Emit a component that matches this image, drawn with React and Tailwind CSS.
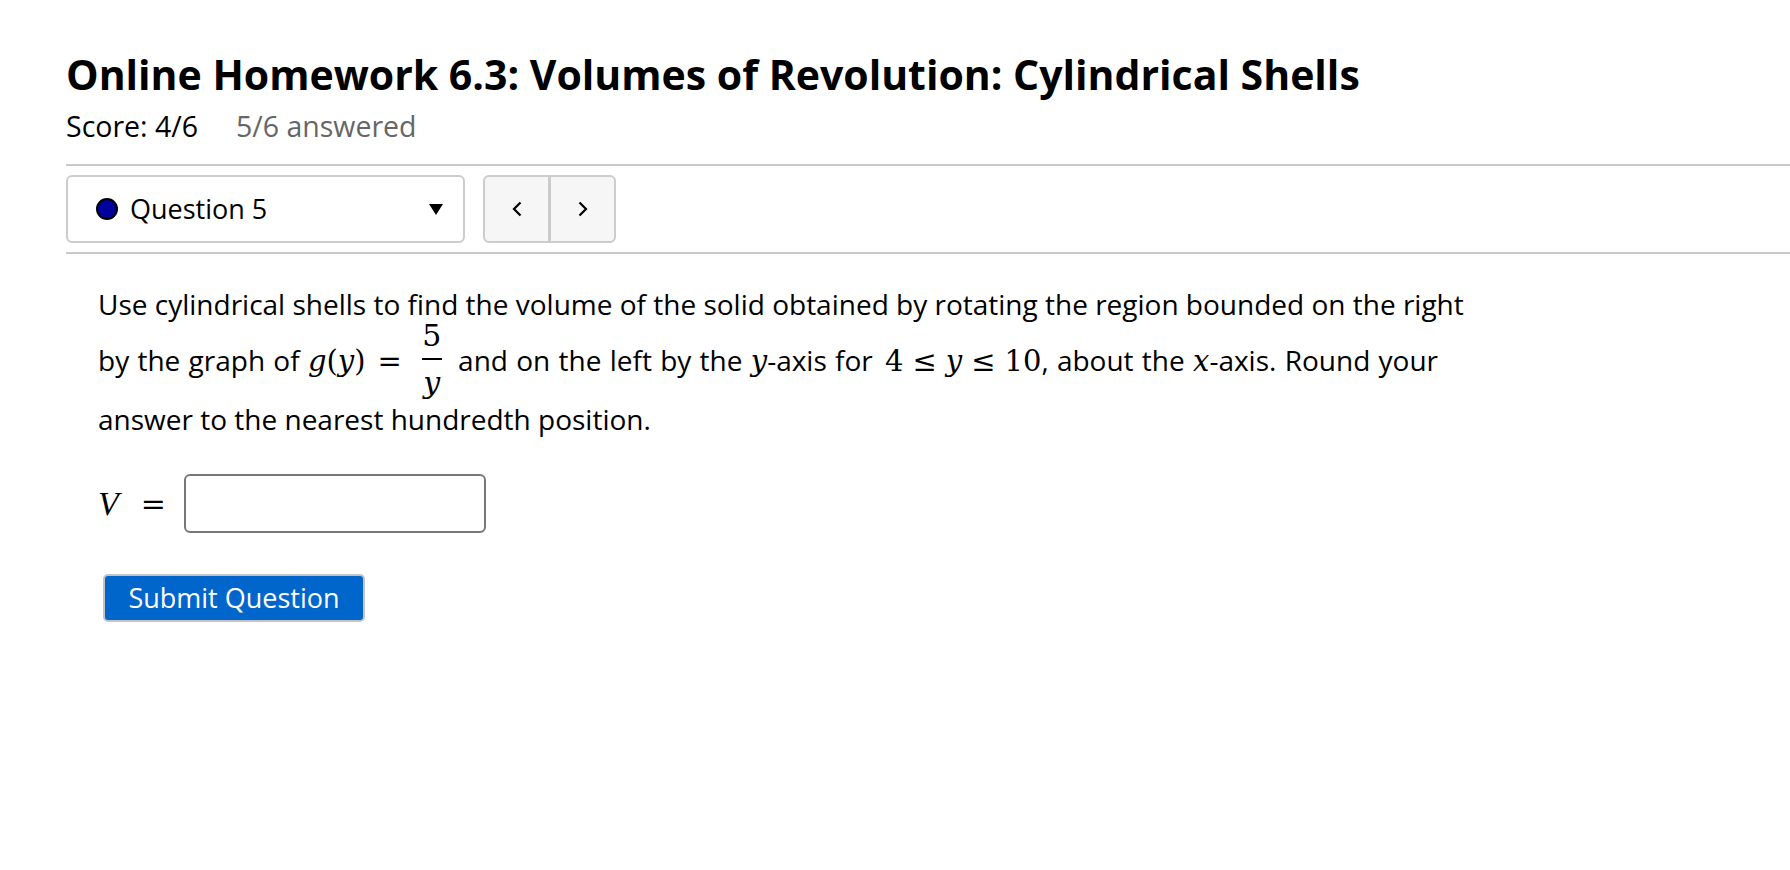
import React from "react";

// math is set in DejaVu Serif, its widths sit closest to the reference's TeX glyphs
function Mi({ children }) {
  return <span className="font-['DejaVu_Serif',serif] italic text-[29px]">{children}</span>;
}

function Mn({ children, className = "" }) {
  return <span className={`font-['DejaVu_Serif',serif] text-[29px] ${className}`}>{children}</span>;
}

function Frac() {
  return (
    <span className="inline-flex flex-col items-center align-[25px] ml-[20px] mr-[8px] font-['DejaVu_Serif',serif] text-[30px]">
      <span className="leading-[24px]">5</span>
      <span className="mt-[10px] border-t-[2px] border-black w-[20px]"></span>
      <span className="italic leading-[24px] mt-[11px]">y</span>
    </span>
  );
}

export default function App() {
  return (
    <div className="min-h-screen bg-white text-black font-['Open_Sans',sans-serif]">
      <div className="pl-[66px] pt-[50px]">
        <h1 className="text-[41px] font-bold leading-[48px]">
          Online Homework 6.3: Volumes of Revolution: Cylindrical Shells
        </h1>
        <div className="flex gap-[38px] text-[28.5px] mt-[12px] leading-[32px]">
          <span>Score: 4/6</span>
          <span className="text-[#666]">5/6 answered</span>
        </div>

        <div className="mt-[22px] border-t-2 border-[#c8c8c8]"></div>

        <div className="flex gap-[18px] py-[9px]">
          <div className="w-[399px] h-[68px] border-2 border-[#cccccc] rounded-[6px] flex items-center pl-[28px] pr-[20px]">
            <span className="w-[22px] h-[22px] rounded-full bg-[#00009c] border-2 border-black"></span>
            <span className="ml-[12px] text-[27px]">Question 5</span>
            <svg className="ml-auto" width="14" height="11" viewBox="0 0 14 11">
              <path d="M0 0 H14 L7 11 Z" fill="black" />
            </svg>
          </div>
          <div className="w-[133px] h-[68px] border-2 border-[#cccccc] rounded-[6px] bg-[#f6f6f6] flex">
            <button className="flex-1 flex items-center justify-center border-r-[3px] border-[#cccccc]">
              <svg width="14" height="20" viewBox="0 0 14 20" fill="none" stroke="black" strokeWidth="2.2">
                <path d="M10.5 3.5 L4 10 L10.5 16.5" />
              </svg>
            </button>
            <button className="flex-1 flex items-center justify-center">
              <svg width="14" height="20" viewBox="0 0 14 20" fill="none" stroke="black" strokeWidth="2.2">
                <path d="M3.5 3.5 L10 10 L3.5 16.5" />
              </svg>
            </button>
          </div>
        </div>

        <div className="border-t-2 border-[#c8c8c8]"></div>

        <div className="pl-[32px] pt-[30px] text-[28px] whitespace-nowrap">
          <div className="leading-[40px]">
            Use cylindrical shells to find the volume of the solid obtained by rotating the region bounded on the right
          </div>
          <div className="leading-[64px] [word-spacing:1px]">
            by the graph of <Mi>g</Mi>
            <Mn>(</Mn>
            <Mi>y</Mi>
            <Mn>)</Mn>
            <Mn className="ml-[12px]">=</Mn>
            <Frac /> and on the left by the <Mi>y</Mi>-axis for <Mn className="ml-[4px]">4</Mn>
            <Mn className="mx-[9px]">≤</Mn>
            <Mi>y</Mi>
            <Mn className="mx-[9px]">≤</Mn>
            <Mn>10</Mn>, about the <Mi>x</Mi>-axis. Round your
          </div>
          <div className="leading-[40px] mt-[4px]">answer to the nearest hundredth position.</div>

          <div className="flex items-center mt-[35px]">
            <span className="font-['Liberation_Serif',serif] italic text-[34px] leading-none">V</span>
            <span className="ml-[22px] font-['DejaVu_Serif',serif] text-[30px] leading-none">=</span>
            <input className="ml-[18px] w-[302px] h-[59px] border-2 border-[#777] rounded-[6px] outline-none px-2" />
          </div>

          <button className="mt-[41px] ml-[5px] w-[262px] h-[48px] bg-[#0066cc] text-white text-[27px] rounded-[5px] border-2 border-[#c4c4c4]">
            Submit Question
          </button>
        </div>
      </div>
    </div>
  );
}
